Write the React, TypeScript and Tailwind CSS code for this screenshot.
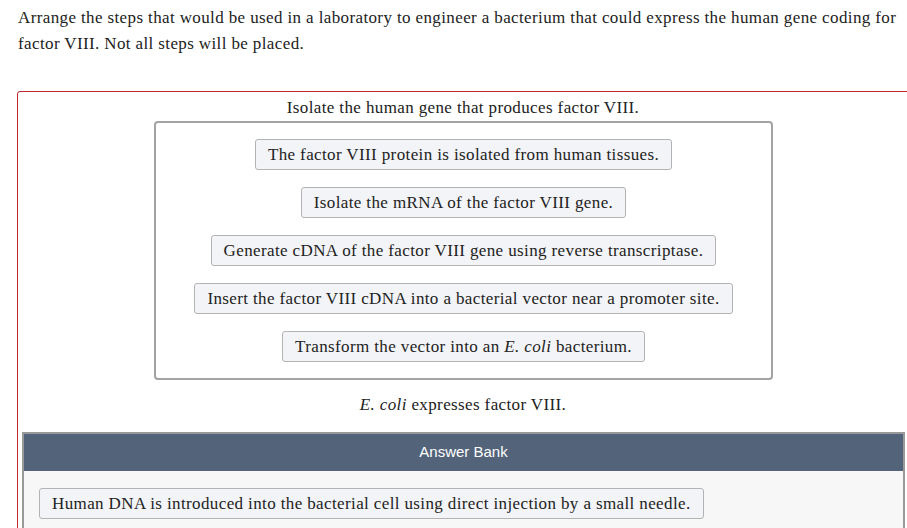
const steps = [
  "The factor VIII protein is isolated from human tissues.",
  "Isolate the mRNA of the factor VIII gene.",
  "Generate cDNA of the factor VIII gene using reverse transcriptase.",
  "Insert the factor VIII cDNA into a bacterial vector near a promoter site.",
];

function Card({ children }: { children: React.ReactNode }) {
  return (
    <div className="h-[31px] flex items-center px-[12px] bg-[#f3f4f7] border border-[#b3b3b3] rounded-[3px] whitespace-nowrap">
      {children}
    </div>
  );
}

export default function App() {
  return (
    <div className="w-[907px] h-[528px] overflow-hidden bg-white font-['Liberation_Serif',serif] text-[17px] tracking-[0.38px] text-[#222]">
      {/* Question */}
      <p className="pl-[18px] pr-[6px] pt-[5px] leading-[26px]">
        Arrange the steps that would be used in a laboratory to engineer a bacterium that could express the human gene coding for factor VIII. Not all steps will be placed.
      </p>

      {/* Workspace */}
      <div className="mt-[34px] ml-[17px] w-[892px] h-[600px] border border-[#c1272d] rounded-tl-[3px] pt-[4px]">
        <div className="text-center leading-[24px]">
          Isolate the human gene that produces factor VIII.
        </div>

        <div className="mt-[1px] ml-[136px] w-[619px] border-2 border-[#a3a3a3] rounded-[4px] py-[16px] flex flex-col items-center gap-[17px]">
          {steps.map((s) => (
            <Card key={s}>{s}</Card>
          ))}
          <Card>
            Transform the vector into an&nbsp;<i>E. coli</i>&nbsp;bacterium.
          </Card>
        </div>

        <div className="mt-[13px] text-center leading-[24px]">
          <i>E. coli</i> expresses factor VIII.
        </div>

        {/* Answer bank */}
        <div className="mt-[15px] ml-[4px] w-[883px] border-2 border-[#999] bg-[#f7f7f7]">
          <div className="h-[37px] flex items-center justify-center bg-[#52637a] text-white text-[15px] tracking-normal font-['Liberation_Sans',Arial,sans-serif]">
            Answer Bank
          </div>
          <div className="pt-[17px] pl-[15px] pb-[20px] flex">
            <Card>Human DNA is introduced into the bacterial cell using direct injection by a small needle.</Card>
          </div>
        </div>
      </div>
    </div>
  );
}
